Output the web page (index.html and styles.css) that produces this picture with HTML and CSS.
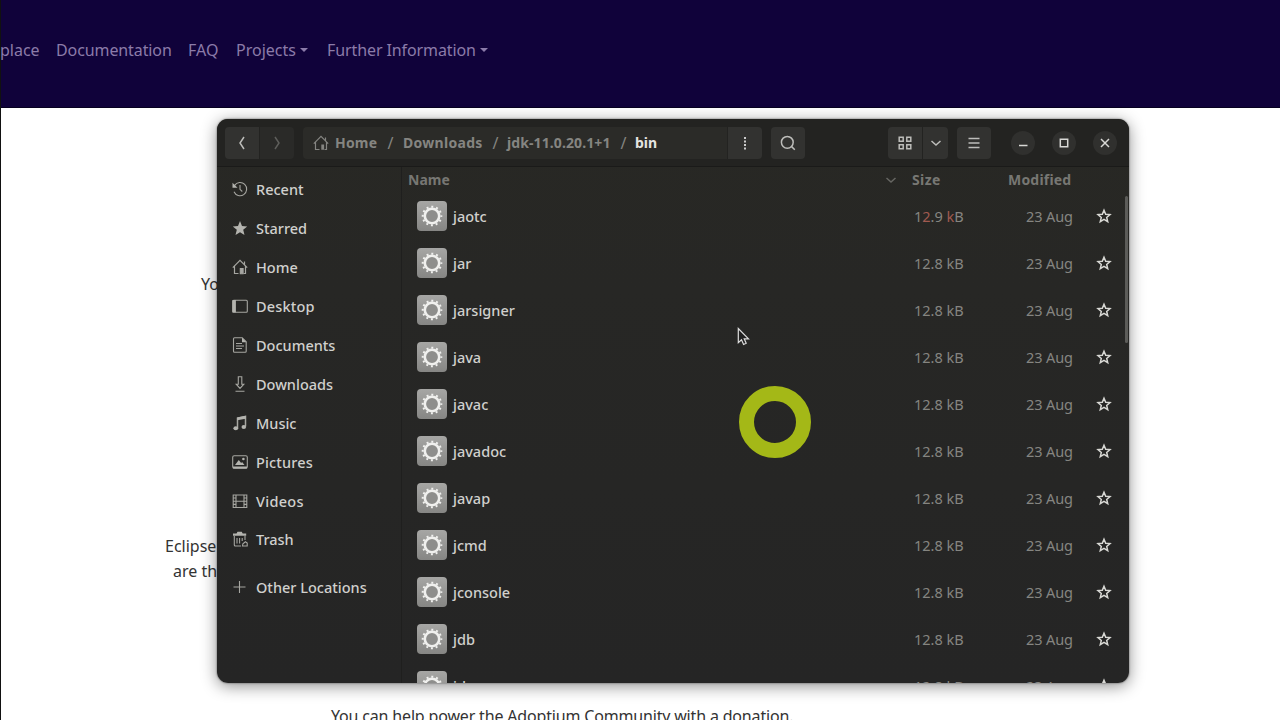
FILE: index.html
```html
<!DOCTYPE html>
<html lang="en">
  <head>
    <meta charset="UTF-8" />
    <meta name="viewport" content="width=device-width, initial-scale=1.0" />
    <title>Adoptium</title>
    <link rel="stylesheet" href="styles.css">
  </head>
  <body>
    <svg class="sprite" width="0" height="0">
      <symbol id="gear" viewBox="0 0 30 30">
        <circle cx="15" cy="15" r="7.2" fill="#8e8e8c" stroke="#f0f0ee" stroke-width="2.6" />
        <circle cx="15" cy="15" r="9.3" fill="none" stroke="#f0f0ee" stroke-width="2" stroke-dasharray="2 2.87" stroke-dashoffset="1" />
      </symbol>
      <symbol id="star" viewBox="0 0 16 16">
        <path d="M8 2.2l1.7 4 4.3.4-3.3 2.8 1 4.2L8 11.3l-3.7 2.3 1-4.2L2 6.6l4.3-.4z" fill="none" stroke="currentColor" stroke-width="1.5" />
      </symbol>
      <symbol id="home" viewBox="0 0 16 16">
        <path d="M.8 8.6L8 1.3l7.2 7.3M2.5 7.2v7.3h4M13.5 7.2v7.3h-2M12.5 2.5v3" fill="none" stroke="currentColor" stroke-width="1.2" />
        <path d="M8.3 9.5h2.8v5.2H8.3z" fill="currentColor" />
      </symbol>
      <symbol id="down" viewBox="0 0 12 8">
        <path d="M1.5 2L6 6l4.5-4" fill="none" stroke="currentColor" stroke-width="1.5" />
      </symbol>
    </svg>

    <header class="site-header">
      <nav class="site-nav">
        <a class="link-market">place</a>
        <a class="link-docs">Documentation</a>
        <a class="link-faq">FAQ</a>
        <a class="link-projects">Projects<i class="caret"></i></a>
        <a class="link-info">Further Information<i class="caret"></i></a>
      </nav>
    </header>

    <main class="page">
      <p class="intro">You</p>
      <p class="eclipse">Eclipse</p>
      <p class="are">are the</p>
      <p class="donate">You can help power the Adoptium Community with a donation.</p>
    </main>

    <section class="window">
      <div class="titlebar">
        <div class="history">
          <button class="btn back"><svg width="10" height="18" viewBox="0 0 10 18"><path d="M7 3L3 9l4 6" /></svg></button>
          <button class="btn forward"><svg width="10" height="18" viewBox="0 0 10 18"><path d="M3 3l4 6-4 6" /></svg></button>
        </div>
        <div class="pathbar">
          <svg class="path-home" width="16" height="16"><use href="#home" /></svg>
          <span class="crumb c-home">Home</span><span class="slash">/</span>
          <span class="crumb c-down">Downloads</span><span class="slash">/</span>
          <span class="crumb c-jdk">jdk-11.0.20.1+1</span><span class="slash">/</span>
          <span class="crumb current">bin</span>
        </div>
        <button class="btn dots"><svg width="4" height="14" viewBox="0 0 4 14"><path d="M1 1h2v2H1zM1 4.5h2v2H1zM1 8h2v2H1zM1 11.5h2v2H1z" /></svg></button>
        <button class="btn search"><svg width="18" height="18" viewBox="0 0 18 18"><circle cx="8.3" cy="8.3" r="5.9" /><path d="M12.4 12.4l3.4 3.4" /></svg></button>
        <div class="view">
          <button class="btn grid"><svg width="14" height="14" viewBox="0 0 14 14"><path d="M1.2 1.2h4v4h-4zM8.8 1.2h4v4h-4zM1.2 8.8h4v4h-4zM8.8 8.8h4v4h-4z" /></svg></button>
          <button class="btn drop"><svg width="12" height="8"><use href="#down" /></svg></button>
        </div>
        <button class="btn menu"><svg width="12" height="12" viewBox="0 0 12 12"><path d="M.5 1.5h11M.5 6h11M.5 10.5h11" /></svg></button>
        <div class="controls">
          <button class="round"><svg width="12" height="12" viewBox="0 0 12 12"><path d="M2 8.5h8.5" /></svg></button>
          <button class="round"><svg width="12" height="12" viewBox="0 0 12 12"><path d="M2.3 2.3h7.4v7.4H2.3z" /></svg></button>
          <button class="round"><svg width="12" height="12" viewBox="0 0 12 12"><path d="M2 2l8 8M10 2l-8 8" /></svg></button>
        </div>
      </div>

      <div class="content">
        <aside class="sidebar">
          <div class="place"><svg viewBox="0 0 16 16"><path d="M2.6 4.4A6.6 6.6 0 1 1 2 10.8M8 4v4.3l2.3 2.2" /><path class="solid" d="M.5 1.8v5h5z" /></svg><span>Recent</span></div>
          <div class="place"><svg viewBox="0 0 16 16"><path class="solid" d="M8 1l2 5 5.2.4-4 3.4 1.3 5.2L8 12.2 3.5 15l1.3-5.2-4-3.4L6 6z" /></svg><span>Starred</span></div>
          <div class="place"><svg><use href="#home" /></svg><span>Home</span></div>
          <div class="place"><svg viewBox="0 0 16 16"><rect x=".7" y="2.2" width="14.6" height="12" rx="1" /><path class="solid" d="M.5 2h3.4v12.4H.5z" /></svg><span class="desktop">Desktop</span></div>
          <div class="place"><svg viewBox="0 0 16 16"><path d="M2.5.8h7.7l4 4v9.4q0 1-1 1H2.5q-1 0-1-1V1.8q0-1 1-1z" /><path class="solid" d="M10 .8v4.4h4.3z" /><path d="M4 6.5h6M4 9h8M4 11.5h6" /></svg><span>Documents</span></div>
          <div class="place"><svg viewBox="0 0 16 16"><path d="M6.3.8h3.5v7.4h2L8 12.4 4.2 8.2h2.1zM3.5 15.2h9" /></svg><span>Downloads</span></div>
          <div class="place"><svg viewBox="0 0 16 16"><path d="M5.5 13V3l8-1.6v10" stroke-width="1.5" /><path class="solid" d="M5.2 2.5l8.5-1.8v3L5.2 5.3z" /><ellipse class="solid" cx="3.8" cy="13.3" rx="2.4" ry="2" /><ellipse class="solid" cx="11.8" cy="12" rx="2.3" ry="2" /></svg><span class="music">Music</span></div>
          <div class="place"><svg viewBox="0 0 16 16"><rect x=".7" y="1.7" width="14.6" height="12.5" rx="1.5" /><path class="solid" d="M3 11l3.8-5 2.3 3 1-1 2.4 3zM1 12.5h14v2H1z" /><circle class="solid" cx="11.4" cy="5" r="1.3" /></svg><span class="pictures">Pictures</span></div>
          <div class="place"><svg viewBox="0 0 16 16"><path d="M1.2 2h13.6v12.5H1.2zM4 2v12.5M12 2v12.5M4 8.2h8" /><path d="M1 5h3M1 8.2h3M1 11.4h3M12 5h3M12 8.2h3M12 11.4h3" /></svg><span class="videos">Videos</span></div>
          <div class="place"><svg viewBox="0 0 16 16"><path d="M2.3 5v9q0 1 1 1H9M13 5v4" /><path class="solid" d="M1 2.5h3.5L5.5.8h4.2l1 1.7h3.5v2.3H1z" /><path d="M5 7v5.5M7.6 7v5.5M10.2 7v3" /><path d="M10.5 15h4.7v-3l-1.8-1.3-2.5 2z" /></svg><span class="trash">Trash</span></div>
          <div class="place other"><svg viewBox="0 0 16 16"><path d="M7.5 2v12M1.5 8h12" /></svg><span>Other Locations</span></div>
        </aside>

        <div class="files">
          <div class="columns">
            <span class="col-name">Name</span>
            <svg class="sort" width="12" height="8"><use href="#down" /></svg>
            <span class="col-size">Size</span>
            <span class="col-modified">Modified</span>
          </div>
          <div class="row"><svg class="exe"><use href="#gear" /></svg><span class="name">jaotc</span><span class="size">1<em>2</em>.9 <em>k</em>B</span><span class="date">23 Aug</span><svg class="star"><use href="#star" /></svg></div>
          <div class="row"><svg class="exe"><use href="#gear" /></svg><span class="name">jar</span><span class="size">12.8 kB</span><span class="date">23 Aug</span><svg class="star"><use href="#star" /></svg></div>
          <div class="row"><svg class="exe"><use href="#gear" /></svg><span class="name">jarsigner</span><span class="size">12.8 kB</span><span class="date">23 Aug</span><svg class="star"><use href="#star" /></svg></div>
          <div class="row"><svg class="exe"><use href="#gear" /></svg><span class="name">java</span><span class="size">12.8 kB</span><span class="date">23 Aug</span><svg class="star"><use href="#star" /></svg></div>
          <div class="row"><svg class="exe"><use href="#gear" /></svg><span class="name">javac</span><span class="size">12.8 kB</span><span class="date">23 Aug</span><svg class="star"><use href="#star" /></svg></div>
          <div class="row"><svg class="exe"><use href="#gear" /></svg><span class="name">javadoc</span><span class="size">12.8 kB</span><span class="date">23 Aug</span><svg class="star"><use href="#star" /></svg></div>
          <div class="row"><svg class="exe"><use href="#gear" /></svg><span class="name">javap</span><span class="size">12.8 kB</span><span class="date">23 Aug</span><svg class="star"><use href="#star" /></svg></div>
          <div class="row"><svg class="exe"><use href="#gear" /></svg><span class="name">jcmd</span><span class="size">12.8 kB</span><span class="date">23 Aug</span><svg class="star"><use href="#star" /></svg></div>
          <div class="row"><svg class="exe"><use href="#gear" /></svg><span class="name">jconsole</span><span class="size">12.8 kB</span><span class="date">23 Aug</span><svg class="star"><use href="#star" /></svg></div>
          <div class="row"><svg class="exe"><use href="#gear" /></svg><span class="name">jdb</span><span class="size">12.8 kB</span><span class="date">23 Aug</span><svg class="star"><use href="#star" /></svg></div>
          <div class="row"><svg class="exe"><use href="#gear" /></svg><span class="name">jdeps</span><span class="size">12.8 kB</span><span class="date">23 Aug</span><svg class="star"><use href="#star" /></svg></div>
          <div class="scrollbar"></div>
        </div>
      </div>
    </section>

    <svg class="pointer" width="14" height="20" viewBox="0 0 14 20"><path d="M1.3 1.5v14.2l3.2-3 2.1 4.8 2.6-1.2-2-4.5h4.3z" fill="#222" stroke="#ddd" stroke-width="1.2" /></svg>
    <div class="ring"></div>
  </body>
</html>
```

FILE: styles.css
```css
* {
  box-sizing: border-box;
}

body {
  margin: 0;
  width: 1280px;
  height: 720px;
  overflow: hidden;
  position: relative;
  background: #fff;
  border-left: 1px solid #111;
  font-family: "Noto Sans", "Open Sans", sans-serif;
  font-size: 16px;
  color: #333;
}

.sprite {
  position: absolute;
}

.site-header {
  height: 108px;
  background: #10023a;
  border-bottom: 1px solid #070020;
}

.site-nav {
  display: flex;
  height: 100px;
  align-items: center;
  color: #8b7ba9;
  white-space: nowrap;
}

.link-market { width: 56px; margin-left: -1px; }
.link-docs { width: 132px; letter-spacing: -0.1px; }
.link-faq { width: 48px; }
.link-projects { width: 91px; }
.link-info { letter-spacing: -0.1px; }

.caret {
  display: inline-block;
  margin-left: 4px;
  vertical-align: 4px;
  border-top: 4px solid;
  border-left: 4px solid transparent;
  border-right: 4px solid transparent;
}

.page {
  display: flex;
  flex-direction: column;
}

.page p {
  margin: 0;
  line-height: 24px;
  white-space: nowrap;
}

.page .intro { margin: 164px 0 0 200px; }
.page .eclipse { margin: 238px 0 0 164px; }
.page .are { margin: 1px 0 0 172px; }
.page .donate { margin: 121px 0 0 330px; letter-spacing: -0.17px; }

/* file manager */
.window {
  position: absolute;
  left: 216px;
  top: 119px;
  width: 912px;
  height: 564px;
  border-radius: 11px;
  overflow: hidden;
  display: flex;
  flex-direction: column;
  background: linear-gradient(#282824, #272725 30%, #252525);
  box-shadow: 0 3px 16px rgba(0, 0, 0, 0.45), 0 0 2px rgba(0, 0, 0, 0.6);
  color: #d0d0cd;
  font-size: 15px;
}

.titlebar {
  display: flex;
  align-items: center;
  height: 48px;
  padding-left: 8px;
  background: #232321;
  border-bottom: 1px solid #1a1a19;
  flex: none;
}

button {
  padding: 0;
  border: 0;
}

button svg {
  display: block;
  margin: auto;
  fill: none;
  stroke: #bdbdba;
  stroke-width: 1.5;
}

.btn {
  height: 32px;
  width: 34px;
  background: #323230;
  border-radius: 4px;
  color: #bdbdba;
}

.history,
.view {
  display: flex;
  gap: 1px;
}

.back { border-radius: 4px 0 0 4px; }
.forward { background: #2a2a28; border-radius: 0 4px 4px 0; }
.forward svg { stroke: #5e5e5b; }

.pathbar {
  display: flex;
  align-items: center;
  width: 424px;
  height: 32px;
  margin-left: 9px;
  padding-left: 10px;
  background: #2b2b28;
  border-radius: 4px 0 0 4px;
  color: #858581;
  font-weight: bold;
  font-size: 14px;
  white-space: nowrap;
}

.path-home { margin-right: 6px; }
.c-home { width: 43px; letter-spacing: 0.2px; }
.c-down { width: 80px; letter-spacing: 0.3px; }
.c-jdk { width: 104px; letter-spacing: 0.1px; }
.c-jdk { margin-left: -1px; }
.slash { width: 25px; text-align: center; font-weight: normal; font-size: 16px; }
.current { color: #e4e4e1; margin-left: -1px; }

.dots { margin-left: 1px; border-radius: 0 4px 4px 0; }
.dots svg { fill: #ccc; stroke: none; }
.search { margin-left: 9px; }
.view { margin-left: 83px; }
.grid { border-radius: 4px 0 0 4px; }
.drop { width: 25px; border-radius: 0 4px 4px 0; }
.menu { margin-left: 9px; }

.controls {
  display: flex;
  gap: 17px;
  margin-left: 20px;
}

.round {
  width: 24px;
  height: 24px;
  border-radius: 50%;
  background: #30302e;
}

.round svg { stroke: #d8d8d5; }

.content {
  display: flex;
  flex: 1;
  min-height: 0;
}

.sidebar {
  width: 185px;
  padding-top: 3px;
  border-right: 1px solid #1f1f1e;
  flex: none;
}

.place {
  display: flex;
  align-items: center;
  height: 38.9px;
  padding-left: 15px;
  gap: 8px;
  font-size: 14.5px;
  font-weight: 500;
  white-space: nowrap;
}

.place svg {
  width: 16px;
  height: 16px;
  fill: none;
  stroke: #a6a6a1;
  stroke-width: 1.1;
  color: #a6a6a1;
}

.place .solid {
  fill: #b4b4af;
  stroke: none;
}

.other { margin-top: 9px; }
.desktop, .pictures { letter-spacing: 0.15px; }
.videos { letter-spacing: 0.3px; }

.files {
  position: relative;
  flex: 1;
}

.columns {
  display: flex;
  align-items: center;
  height: 25px;
  padding-left: 6px;
  color: #777773;
  font-weight: bold;
  font-size: 14px;
}

.col-name { width: 477px; }
.sort { width: 12px; margin-right: 15px; color: #666662; }
.col-size { width: 96px; letter-spacing: 0.4px; }
.col-modified { letter-spacing: 0.2px; }

.row {
  display: flex;
  align-items: center;
  height: 47.1px;
  padding-left: 15px;
  font-size: 14.5px;
  white-space: nowrap;
}

.exe {
  width: 30px;
  height: 30px;
  border-radius: 4px;
  background: linear-gradient(#a6a6a4, #868684);
}

.name { width: 461px; margin-left: 6px; font-weight: 500; }
.size { width: 112px; color: #858581; }
.size em { font-style: normal; color: #a05a50; }
.date { width: 47px; color: #858581; letter-spacing: -0.1px; }

.star {
  width: 16px;
  height: 16px;
  margin-left: 23px;
  color: #d8d8d4;
}

.scrollbar {
  position: absolute;
  top: 29px;
  right: 1px;
  width: 3px;
  height: 147px;
  border-radius: 2px;
  background: #5c5c59;
}

.pointer {
  position: absolute;
  left: 736px;
  top: 327px;
}

.ring {
  position: absolute;
  left: 738px;
  top: 386px;
  width: 72px;
  height: 72px;
  border: 15.5px solid #a4b817;
  border-radius: 50%;
}
```
